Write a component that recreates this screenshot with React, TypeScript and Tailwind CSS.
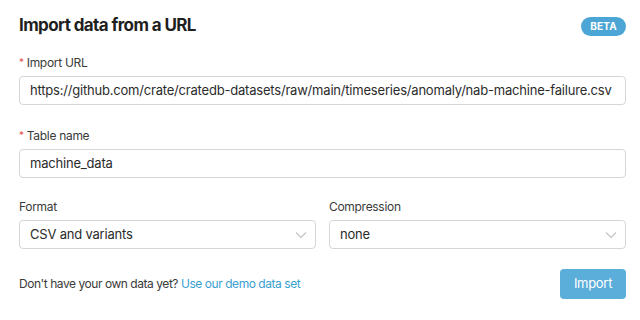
import React from "react";

function Chevron() {
  return (
    <svg width="12" height="8" viewBox="0 0 12 8" fill="none" className="shrink-0">
      <path d="M1 1.5 L6 6.5 L11 1.5" stroke="#c4c4c4" strokeWidth="1.2" />
    </svg>
  );
}

function Label({ children, required }: { children: React.ReactNode; required?: boolean }) {
  return (
    <div className="text-[12px] leading-[18px] tracking-[-0.3px] text-[#3a3a3a] h-[18px] flex items-center">
      {required && <span className="text-[#e5534b] mr-[3px] text-[10px] leading-[10px] -mt-[3px]">*</span>}
      {children}
    </div>
  );
}

const box =
  "h-[29px] border border-[#d6d6d6] rounded-[4px] flex items-center text-[13px] tracking-[-0.2px] text-[#2b2b2b]";

export default function App() {
  return (
    <div
      className="w-[640px] h-[320px] bg-white pt-[13px] pl-[19px] pr-[14px]"
      style={{ fontFamily: "Inter, 'Noto Sans', sans-serif" }}
    >
      <div className="flex items-center justify-between h-[26px]">
        <h2 className="text-[17px] font-bold text-[#1f1f1f] tracking-[-0.6px]">Import data from a URL</h2>
        <span className="h-[19px] w-[45px] rounded-full bg-[#4ba6d6] text-white text-[10px] font-bold flex items-center justify-center tracking-[0.2px]">
          BETA
        </span>
      </div>

      <div className="mt-[15px]">
        <Label required>Import URL</Label>
        <div className={`mt-[4px] ${box} px-[10px] whitespace-nowrap overflow-hidden`}>
          https://github.com/crate/cratedb-datasets/raw/main/timeseries/anomaly/nab-machine-failure.csv
        </div>
      </div>

      <div className="mt-[22px]">
        <Label required>Table name</Label>
        <div className={`mt-[4px] ${box} px-[10px]`}>machine_data</div>
      </div>

      <div className="mt-[20px] grid grid-cols-2 gap-x-[13px]">
        <div>
          <Label>Format</Label>
          <div className={`mt-[4px] ${box} justify-between pl-[10px] pr-[8px]`}>
            <span>CSV and variants</span>
            <Chevron />
          </div>
        </div>
        <div>
          <Label>Compression</Label>
          <div className={`mt-[4px] ${box} justify-between pl-[10px] pr-[8px]`}>
            <span>none</span>
            <Chevron />
          </div>
        </div>
      </div>

      <div className="mt-[20px] flex items-center justify-between">
        <div className="text-[12px] tracking-[-0.45px] text-[#3a3a3a]">
          Don't have your own data yet? <span className="text-[#3a9fd1]">Use our demo data set</span>
        </div>
        <button className="h-[30px] w-[66px] rounded-[4px] bg-[#5aaed9] text-white text-[13px] tracking-[-0.3px]">
          Import
        </button>
      </div>
    </div>
  );
}
